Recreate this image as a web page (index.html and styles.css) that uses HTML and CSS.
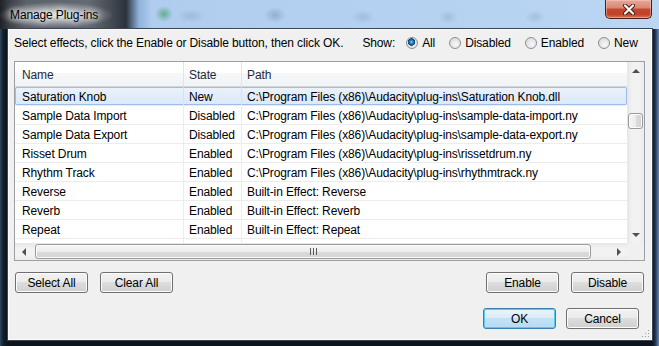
FILE: index.html
```html
<!DOCTYPE html>
<html lang="en">
<head>
    <meta charset="UTF-8">
    <meta name="viewport" content="width=device-width, initial-scale=1.0">
    <title>Manage Plug-ins</title>
    <link rel="stylesheet" href="styles.css">
</head>
<body>
    <div class="window">
        <div class="titlebar">
            <div class="title">Manage Plug-ins</div>
            <div class="close-button">
                <svg width="12" height="11" viewBox="0 0 12 11">
                    <path d="M2 1.5 L10 9.5 M10 1.5 L2 9.5" stroke="#4a1a12" stroke-width="4" stroke-linecap="round"/>
                    <path d="M2 1.5 L10 9.5 M10 1.5 L2 9.5" stroke="#ffffff" stroke-width="2.2" stroke-linecap="round"/>
                </svg>
            </div>
        </div>
        <div class="frame">
            <div class="client">
                <div class="top-row">
                    <div class="hint">Select effects, click the Enable or Disable button, then click OK.</div>
                    <div class="show-group">
                        <span class="show-label">Show:</span>
                        <label class="radio-option"><span class="radio checked"></span>All</label>
                        <label class="radio-option"><span class="radio"></span>Disabled</label>
                        <label class="radio-option"><span class="radio"></span>Enabled</label>
                        <label class="radio-option"><span class="radio"></span>New</label>
                    </div>
                </div>

                <div class="listview">
                    <div class="table-view">
                        <div class="list-row list-header">
                            <div class="cell col-name">Name</div>
                            <div class="cell col-state">State</div>
                            <div class="cell col-path">Path</div>
                        </div>
                        <div class="list-row selected">
                            <div class="cell col-name">Saturation Knob</div>
                            <div class="cell col-state">New</div>
                            <div class="cell col-path">C:\Program Files (x86)\Audacity\plug-ins\Saturation Knob.dll</div>
                        </div>
                        <div class="list-row">
                            <div class="cell col-name">Sample Data Import</div>
                            <div class="cell col-state">Disabled</div>
                            <div class="cell col-path">C:\Program Files (x86)\Audacity\plug-ins\sample-data-import.ny</div>
                        </div>
                        <div class="list-row">
                            <div class="cell col-name">Sample Data Export</div>
                            <div class="cell col-state">Disabled</div>
                            <div class="cell col-path">C:\Program Files (x86)\Audacity\plug-ins\sample-data-export.ny</div>
                        </div>
                        <div class="list-row">
                            <div class="cell col-name">Risset Drum</div>
                            <div class="cell col-state">Enabled</div>
                            <div class="cell col-path">C:\Program Files (x86)\Audacity\plug-ins\rissetdrum.ny</div>
                        </div>
                        <div class="list-row">
                            <div class="cell col-name">Rhythm Track</div>
                            <div class="cell col-state">Enabled</div>
                            <div class="cell col-path">C:\Program Files (x86)\Audacity\plug-ins\rhythmtrack.ny</div>
                        </div>
                        <div class="list-row">
                            <div class="cell col-name">Reverse</div>
                            <div class="cell col-state">Enabled</div>
                            <div class="cell col-path">Built-in Effect: Reverse</div>
                        </div>
                        <div class="list-row">
                            <div class="cell col-name">Reverb</div>
                            <div class="cell col-state">Enabled</div>
                            <div class="cell col-path">Built-in Effect: Reverb</div>
                        </div>
                        <div class="list-row">
                            <div class="cell col-name">Repeat</div>
                            <div class="cell col-state">Enabled</div>
                            <div class="cell col-path">Built-in Effect: Repeat</div>
                        </div>
                        <div class="list-row">
                            <div class="cell col-name"></div>
                            <div class="cell col-state"></div>
                            <div class="cell col-path"></div>
                        </div>
                    </div>

                    <div class="vscroll">
                        <div class="scroll-btn"><span class="arrow arrow-up"></span></div>
                        <div class="vtrack"><div class="vthumb"></div></div>
                        <div class="scroll-btn"><span class="arrow arrow-down"></span></div>
                    </div>

                    <div class="hscroll">
                        <div class="scroll-btn"><span class="arrow arrow-left"></span></div>
                        <div class="htrack"><div class="hthumb"><span class="grip"></span></div></div>
                        <div class="scroll-btn"><span class="arrow arrow-right"></span></div>
                    </div>
                    <div class="corner"></div>
                </div>

                <div class="button-row">
                    <div class="button-group">
                        <button type="button" class="win-button">Select All</button>
                        <button type="button" class="win-button">Clear All</button>
                    </div>
                    <div class="button-group">
                        <button type="button" class="win-button">Enable</button>
                        <button type="button" class="win-button">Disable</button>
                    </div>
                </div>

                <div class="dialog-buttons">
                    <button type="button" class="win-button default-button">OK</button>
                    <button type="button" class="win-button">Cancel</button>
                </div>

                <svg class="size-grip" width="10" height="10" viewBox="0 0 10 10">
                    <rect x="8" y="2" width="1" height="1" fill="#a0a0a0"/>
                    <rect x="5" y="5" width="1" height="1" fill="#a0a0a0"/>
                    <rect x="8" y="5" width="1" height="1" fill="#a0a0a0"/>
                    <rect x="2" y="8" width="1" height="1" fill="#a0a0a0"/>
                    <rect x="5" y="8" width="1" height="1" fill="#a0a0a0"/>
                    <rect x="8" y="8" width="1" height="1" fill="#a0a0a0"/>
                </svg>
            </div>
        </div>
    </div>
</body>
</html>
```

FILE: styles.css
```css
body {
    margin: 0;
    padding: 0;
    background-color: #0c141e;
    font-family: 'Liberation Sans', Arial, sans-serif;
    font-size: 12px;
    letter-spacing: -0.12px;
    color: #000000;
    overflow: hidden;
}

.window {
    width: 659px;
    height: 346px;
    display: flex;
    flex-direction: column;
}

/* glass title bar */
.titlebar {
    height: 29px;
    flex-shrink: 0;
    display: flex;
    justify-content: space-between;
    align-items: flex-start;
    padding-left: 10px;
    box-sizing: border-box;
    background:
        radial-gradient(ellipse 9px 8px at 164px 14px, rgba(50, 150, 80, 0.6), rgba(50, 150, 80, 0)),
        radial-gradient(ellipse 14px 7px at 191px 16px, rgba(80, 100, 125, 0.18), rgba(80, 100, 125, 0)),
        radial-gradient(ellipse 11px 8px at 275px 15px, rgba(60, 80, 100, 0.25), rgba(60, 80, 100, 0)),
        radial-gradient(ellipse 12px 7px at 363px 17px, rgba(80, 100, 125, 0.18), rgba(80, 100, 125, 0)),
        radial-gradient(ellipse 10px 7px at 448px 17px, rgba(80, 100, 125, 0.18), rgba(80, 100, 125, 0)),
        radial-gradient(ellipse 10px 7px at 535px 17px, rgba(80, 100, 125, 0.18), rgba(80, 100, 125, 0)),
        radial-gradient(ellipse 58px 13px at 56px 15px, rgba(226, 229, 233, 0.95), rgba(226, 229, 233, 0)),
        linear-gradient(90deg, #1e2227 0, #3c4148 10px, #5c6269 26px, #646a71 88px, #474d55 110px, #2a323c 126px, #8fb3dc 139px, #b0cdef 152px, #bad6f3 100%);
}

.title {
    margin-top: 7px;
    line-height: 16px;
    text-shadow: 0 0 6px #ffffff, 0 0 10px #ffffff;
}

.close-button {
    width: 47px;
    height: 19px;
    margin-right: 7px;
    box-sizing: border-box;
    border: 1px solid #4a1c14;
    border-top: none;
    border-radius: 0 0 5px 5px;
    display: flex;
    justify-content: center;
    align-items: center;
    background: linear-gradient(#e6a899 0%, #d98572 45%, #c4462c 50%, #c0432a 80%, #d2785e 100%);
    box-shadow: inset 0 0 0 1px rgba(255, 210, 200, 0.45);
}

/* dark frame round the client area */
.frame {
    flex: 1;
    display: flex;
    padding: 0 7px 6px 8px;
    background:
        radial-gradient(ellipse 14px 4px at 52px 346px, rgba(110, 160, 230, 0.8), rgba(110, 160, 230, 0)),
        linear-gradient(90deg, #2e4760 0, #13202e 3px, #0c141e 7px, #0c141e calc(100% - 7px), #1e2e44 calc(100% - 4px), #6a88b8 100%);
}

.client {
    position: relative;
    flex: 1;
    display: flex;
    flex-direction: column;
    background-color: #f0f0f0;
    border: 1px solid #fafafa;
    box-shadow: 0 0 0 1px #3a4452;
}

.top-row {
    display: flex;
    align-items: center;
    height: 18px;
    padding: 4px 0 0 5px;
    margin-bottom: 9px;
}

.show-group {
    display: flex;
    align-items: center;
    gap: 14px;
    margin-left: 19px;
}

.show-label {
    margin-right: -3px;
}

.radio-option {
    display: flex;
    align-items: center;
    gap: 4px;
}

.radio {
    width: 12px;
    height: 12px;
    box-sizing: border-box;
    border-radius: 50%;
    border: 1px solid #8e8f8f;
    background: radial-gradient(circle at 60% 65%, #f8f8f8 0, #e2e2e2 60%, #d0d0d0 100%);
}

.radio.checked {
    background:
        radial-gradient(circle at 45% 40%, #8fd8ff 0, #2a86c8 1.5px, #10406e 3.5px, rgba(16, 64, 110, 0) 4px),
        radial-gradient(circle, #f6f6f6 0, #d8d8d8 100%);
}

/* list control */
.listview {
    height: 200px;
    margin: 0 6px 0 5px;
    box-sizing: border-box;
    border: 1px solid #9a9fa6;
    background-color: #ffffff;
    display: grid;
    grid-template-columns: 1fr 17px;
    grid-template-rows: 1fr 17px;
}

.table-view {
    overflow: hidden;
}

.list-row {
    display: grid;
    grid-template-columns: 169px 58px 1fr;
    height: 19px;
    box-sizing: border-box;
    border-bottom: 1px solid #ececec;
}

.cell {
    white-space: nowrap;
    line-height: 14px;
    padding: 3px 0 0 5px;
    border-right: 1px solid #ececec;
}

.col-name {
    padding-left: 7px;
}

.col-path {
    border-right: none;
}

.list-header {
    height: 25px;
    border-bottom: 1px solid #d5d5d5;
    background: linear-gradient(#ffffff 0%, #ffffff 45%, #f6f7f8 46%, #f2f3f4 100%);
    color: #1e2a3a;
}

.list-header .cell {
    padding-top: 6px;
    border-right-color: #e2e4e8;
}

.list-row.selected {
    background: linear-gradient(#eaf2fc, #dbe8f9);
    box-shadow: inset 0 0 0 1px #9cbde8;
    border-radius: 2px;
}

.list-row.selected .cell {
    border-right-color: #d3e2f5;
}

/* scroll bars */
.vscroll {
    display: flex;
    flex-direction: column;
    background: linear-gradient(90deg, #e6e6e6, #f2f2f2 30%, #f2f2f2 70%, #ebebeb);
}

.hscroll {
    display: flex;
    background: linear-gradient(#e6e6e6, #f2f2f2 30%, #f2f2f2 70%, #ebebeb);
}

.corner {
    background-color: #f0f0f0;
}

.scroll-btn {
    width: 17px;
    height: 17px;
    flex-shrink: 0;
    display: flex;
    justify-content: center;
    align-items: center;
}

.arrow {
    width: 0;
    height: 0;
}

.arrow-up {
    border-left: 4px solid transparent;
    border-right: 4px solid transparent;
    border-bottom: 4px solid #505050;
}

.arrow-down {
    border-left: 4px solid transparent;
    border-right: 4px solid transparent;
    border-top: 4px solid #505050;
}

.arrow-left {
    border-top: 4px solid transparent;
    border-bottom: 4px solid transparent;
    border-right: 4px solid #505050;
}

.arrow-right {
    border-top: 4px solid transparent;
    border-bottom: 4px solid transparent;
    border-left: 4px solid #505050;
}

.vtrack {
    flex: 1;
    padding: 34px 1px 0 1px;
}

.vthumb {
    height: 16px;
    box-sizing: border-box;
    border: 1px solid #9a9a9a;
    border-radius: 3px;
    background: linear-gradient(90deg, #f6f6f6, #ececec 50%, #dcdcdc 51%, #d2d2d2);
    box-shadow: inset 0 0 0 1px #fbfbfb;
}

.htrack {
    flex: 1;
    padding: 1px 0 1px 3px;
}

.hthumb {
    width: 556px;
    height: 15px;
    box-sizing: border-box;
    border: 1px solid #9a9a9a;
    border-radius: 3px;
    background: linear-gradient(#f6f6f6, #ececec 50%, #dcdcdc 51%, #d2d2d2);
    box-shadow: inset 0 0 0 1px #fbfbfb;
    display: flex;
    justify-content: center;
    align-items: center;
}

.grip {
    width: 7px;
    height: 7px;
    background: repeating-linear-gradient(90deg, #5a5a5a 0, #5a5a5a 1px, transparent 1px, transparent 3px);
}

/* buttons */
.button-row {
    display: flex;
    justify-content: space-between;
    margin-top: 11px;
    padding: 0 7px 0 6px;
}

.button-group {
    display: flex;
    gap: 12px;
}

.dialog-buttons {
    display: flex;
    justify-content: flex-end;
    gap: 10px;
    margin-top: 15px;
    padding-right: 12px;
}

.win-button {
    width: 73px;
    height: 21px;
    padding: 0;
    font-family: 'Liberation Sans', Arial, sans-serif;
    font-size: 12px;
    letter-spacing: -0.12px;
    color: #000000;
    border: 1px solid #707070;
    border-radius: 3px;
    background: linear-gradient(#f2f2f2 0%, #ebebeb 48%, #dddddd 50%, #cfcfcf 100%);
    box-shadow: inset 0 0 0 1px #fcfcfc;
}

.default-button {
    border-color: #3c7fb1;
    background: linear-gradient(#e8f4fc 0%, #dcedf9 48%, #c4e2f6 50%, #b7dbf3 100%);
    box-shadow: inset 0 0 0 1px #58c8f4;
}

.size-grip {
    position: absolute;
    right: 1px;
    bottom: 1px;
}
```
